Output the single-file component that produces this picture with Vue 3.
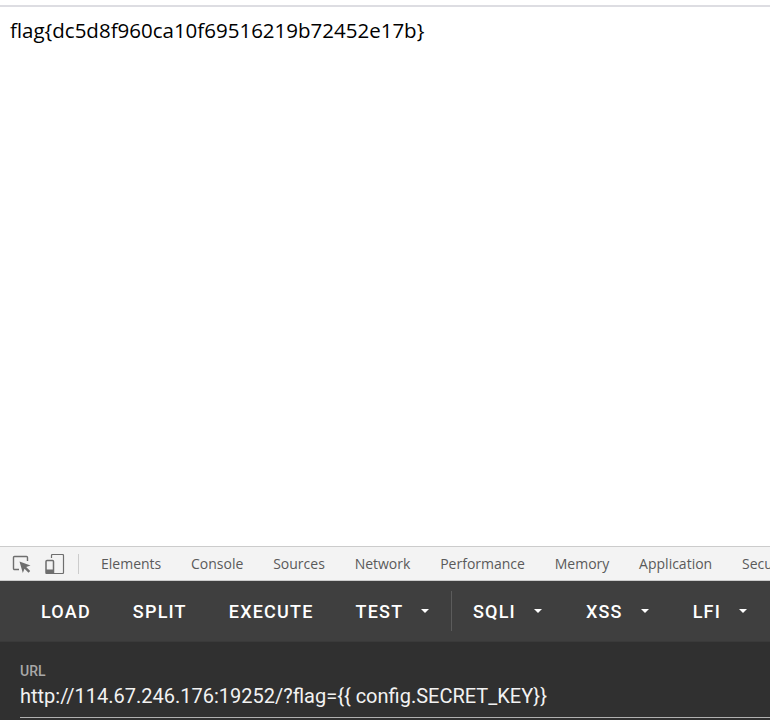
<script setup>
const tabs = ['Elements', 'Console', 'Sources', 'Network', 'Performance', 'Memory', 'Application', 'Security']
const before = [{ t: 'LOAD' }, { t: 'SPLIT' }, { t: 'EXECUTE' }, { t: 'TEST', caret: true }]
const after = [{ t: 'SQLI', caret: true }, { t: 'XSS', caret: true }, { t: 'LFI', caret: true }]
const url = 'http://114.67.246.176:19252/?flag=' + String.fromCharCode(123, 123) + ' config.SECRET_KEY' + String.fromCharCode(125, 125)
const flag = 'flag' + String.fromCharCode(123) + 'dc5d8f960ca10f69516219b72452e17b' + String.fromCharCode(125)
</script>

<template>
  <div class="page">
    <main class="content">
      <p class="flag" v-text="flag"></p>
    </main>
    <section class="devtools">
      <div class="tabs">
        <svg class="ic" width="20" height="20" viewBox="0 0 20 20">
          <path d="M7 15.5H2.5a1 1 0 0 1-1-1V3.5a1 1 0 0 1 1-1h12a1 1 0 0 1 1 1V7" fill="none" stroke="#6e6e6e" stroke-width="1.4"/>
          <path d="M7.5 7.5l11 4-4.3 1.6 4 4-1.7 1.7-4-4L10.8 19z" fill="#6e6e6e"/>
        </svg>
        <svg class="ic ic2" width="20" height="20" viewBox="0 0 20 20">
          <path d="M6.5 4V1.5a1 1 0 0 1 1-1h10a1 1 0 0 1 1 1v17a1 1 0 0 1-1 1H8" fill="none" stroke="#6e6e6e" stroke-width="1.2"/>
          <rect x="1" y="6.5" width="7.5" height="13" rx="1" fill="none" stroke="#6e6e6e" stroke-width="1.5"/>
          <rect x="1" y="15.5" width="7.5" height="4" fill="#6e6e6e"/>
        </svg>
        <span class="vsep"></span>
        <span v-for="tab in tabs" :key="tab" class="tab">{{ tab }}</span>
      </div>
      <div class="bar">
        <span v-for="b in before" :key="b.t" class="btn">{{ b.t }}<i v-if="b.caret" class="caret"></i></span>
        <span class="bsep"></span>
        <span v-for="b in after" :key="b.t" class="btn after">{{ b.t }}<i v-if="b.caret" class="caret"></i></span>
      </div>
      <div class="field">
        <label class="lbl">URL</label>
        <div class="url" v-text="url"></div>
      </div>
    </section>
  </div>
</template>

<style>
html, body { margin: 0; overflow: hidden; background: #fff; }
</style>

<style scoped>
.page {
  width: 770px;
  height: 720px;
  display: flex;
  flex-direction: column;
  overflow: hidden;
  padding-top: 5px;
  box-sizing: border-box;
  background: #fff;
}
.content {
  flex: 1;
  border-top: 2px solid #dddde2;
  padding: 10px 10px 0;
  min-height: 0;
}
.flag {
  margin: 0;
  font: 20.5px/26px "Open Sans", sans-serif;
  color: #000;
}
.devtools { flex: none; }
.tabs {
  height: 33px;
  display: flex;
  align-items: center;
  background: #f3f3f3;
  border-top: 1px solid #ccc;
  border-bottom: 1px solid #ccc;
  padding-left: 12px;
  font: 14px "Open Sans", sans-serif;
  color: #5a5a5a;
  white-space: nowrap;
  overflow: hidden;
}
.ic { flex: none; }
.ic2 { margin-left: 13px; }
.vsep {
  flex: none;
  width: 1px;
  height: 20px;
  background: #ccc;
  margin: 0 22px 0 13px;
}
.tab { margin-right: 29.8px; }
.bar {
  height: 60px;
  display: flex;
  align-items: center;
  padding-left: 20px;
  background: #3f3f3f;
  font: 500 18px Roboto, sans-serif;
  letter-spacing: 1.2px;
  color: #fff;
  white-space: nowrap;
}
.btn {
  display: flex;
  align-items: center;
  padding: 0 21px;
}
.btn.after { padding-right: 22px; }
.caret {
  width: 0;
  height: 0;
  margin: 0 1px 0 18px;
  border-left: 4.5px solid transparent;
  border-right: 4.5px solid transparent;
  border-top: 4.5px solid #fff;
}
.bsep {
  width: 1px;
  height: 40px;
  background: #5c5c5c;
}
.field {
  height: 79px;
  box-sizing: border-box;
  background: #303030;
  border-top: 1px solid #3a3a3a;
  padding: 21px 0 0 20px;
  font-family: Roboto, sans-serif;
}
.lbl {
  display: block;
  font-size: 14px;
  font-weight: 500;
  line-height: 16px;
  color: #a8a8a8;
}
.url {
  margin-top: 2px;
  font-size: 20px;
  line-height: 30px;
  color: #f2f2f2;
  padding-bottom: 6px;
  border-bottom: 1px solid #b0b0b0;
}
</style>
